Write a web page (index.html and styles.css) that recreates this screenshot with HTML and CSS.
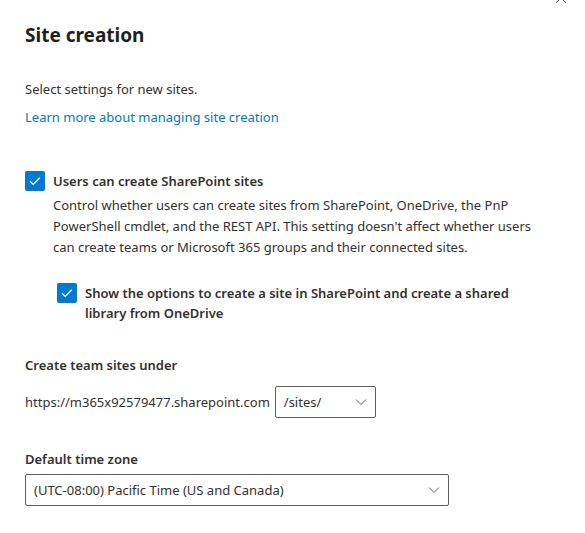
FILE: index.html
```html
<!DOCTYPE html>
<html>
<head>
<meta charset="utf-8">
<link rel="stylesheet" href="styles.css">
</head>
<body>
<div class="panel">
  <svg class="close" width="12" height="12" viewBox="0 0 12 12"><path d="M1 1L11 11M11 1L1 11" stroke="#605e5c" stroke-width="1" fill="none"/></svg>
  <h1 class="title">Site creation</h1>
  <p class="intro">Select settings for new sites.</p>
  <a class="link" href="#">Learn more about managing site creation</a>

  <div class="check main-check">
    <span class="box"><svg width="12" height="10" viewBox="0 0 12 10"><path d="M1 5.2L4.2 8.3L11 1.6" stroke="#fff" stroke-width="1.3" fill="none"/></svg></span>
    <span class="check-label">Users can create SharePoint sites</span>
  </div>
  <p class="desc">Control whether users can create sites from SharePoint, OneDrive, the PnP PowerShell cmdlet, and the REST API. This setting doesn't affect whether users can create teams or Microsoft 365 groups and their connected sites.</p>

  <div class="check sub-check">
    <span class="box"><svg width="12" height="10" viewBox="0 0 12 10"><path d="M1 5.2L4.2 8.3L11 1.6" stroke="#fff" stroke-width="1.3" fill="none"/></svg></span>
    <span class="check-label">Show the options to create a site in SharePoint and create a shared library from OneDrive</span>
  </div>

  <div class="field-label team-label">Create team sites under</div>
  <div class="url-row">
    <span class="url">https://m365x92579477.sharepoint.com</span>
    <div class="dropdown small">
      <span>/sites/</span>
      <svg width="12" height="8" viewBox="0 0 12 8"><path d="M1 1.5L6 6.5L11 1.5" stroke="#605e5c" stroke-width="1" fill="none"/></svg>
    </div>
  </div>

  <div class="field-label tz-label">Default time zone</div>
  <div class="dropdown wide">
    <span>(UTC-08:00) Pacific Time (US and Canada)</span>
    <svg width="12" height="8" viewBox="0 0 12 8"><path d="M1 1.5L6 6.5L11 1.5" stroke="#605e5c" stroke-width="1" fill="none"/></svg>
  </div>
</div>
</body>
</html>
```
FILE: styles.css
```css
* { box-sizing: border-box; }
html, body { margin: 0; padding: 0; background: #fff; }
body {
  font-family: "Noto Sans", "Open Sans", sans-serif;
  font-size: 13px;
  color: #323130;
  width: 585px;
  height: 533px;
  overflow: hidden;
}
.panel {
  position: relative;
  padding: 23px 25px 0 25px;
}
.close {
  position: absolute;
  top: -8px;
  left: 555px;
}
.title {
  margin: 0;
  font-size: 19px;
  font-weight: 700;
  line-height: 24px;
  color: #201f1e;
}
.intro {
  margin: 32px 0 0 0;
  line-height: 20px;
}
.link {
  display: block;
  margin-top: 8px;
  line-height: 20px;
  color: #0078d4;
  text-decoration: none;
}
.check {
  display: flex;
  align-items: flex-start;
  gap: 8px;
}
.main-check { margin-top: 44px; }
.box {
  flex: none;
  width: 20px;
  height: 20px;
  border-radius: 2px;
  background: #0078d4;
  display: flex;
  align-items: center;
  justify-content: center;
}
.check-label {
  font-weight: 600;
  line-height: 20px;
  color: #323130;
}
.desc {
  margin: 4px 0 0 28px;
  line-height: 21px;
  width: 490px;
}
.sub-check {
  margin: 25px 0 0 32px;
  width: 460px;
}
.field-label {
  font-weight: 600;
  line-height: 20px;
}
.team-label { margin-top: 32px; }
.url-row {
  display: flex;
  align-items: center;
  gap: 5px;
  margin-top: 11px;
}
.dropdown {
  display: flex;
  align-items: center;
  justify-content: space-between;
  border: 1px solid #605e5c;
  border-radius: 2px;
  height: 32px;
  padding: 0 8px 0 8px;
}
.dropdown.small { width: 101px; }
.dropdown.wide { width: 424px; margin-top: 5px; }
.tz-label { margin-top: 31px; }
```
